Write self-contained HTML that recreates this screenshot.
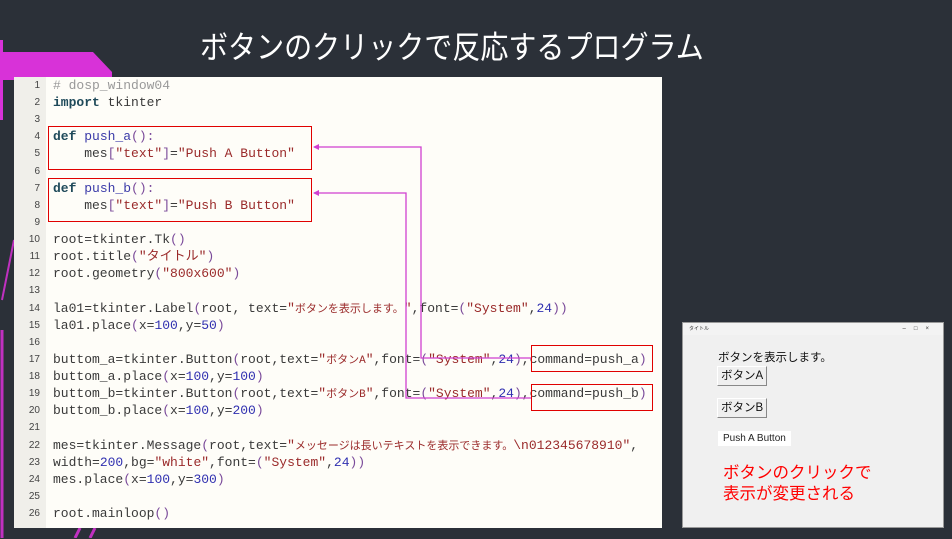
<!DOCTYPE html>
<html><head><meta charset="utf-8"><style>
*{margin:0;padding:0;box-sizing:border-box}
body{width:952px;height:538px;background:#2b3038;position:relative;overflow:hidden;font-family:"Liberation Sans","Noto Sans CJK JP",sans-serif}
.title{position:absolute;left:200px;top:22px;color:#fff;font-size:31.5px;white-space:nowrap;transform:scaleX(0.89);transform-origin:0 0}
.panel{position:absolute;left:14px;top:77px;width:648px;height:451px;background:#fefdf8}
.gutter{position:absolute;left:0;top:0;width:32px;height:451px;background:#f0efea}
.code{position:absolute;left:0;top:0;font-family:"Liberation Mono","Noto Sans CJK JP",monospace;font-size:13px;line-height:17.12px;color:#3a3a3a;white-space:pre}
.ln{position:absolute;left:0;width:26px;text-align:right;font-family:"Liberation Sans",sans-serif;font-size:10px;color:#444}
.l{position:absolute;left:39px}
.k{color:#1f4a5a;font-weight:bold}.f{color:#3a3aa8}.s{color:#9a2a2a}.n{color:#3030b0}.p{color:#7a4a9a}.c{color:#999}
.rb{position:absolute;border:1.5px solid #e00000}
.win{position:absolute;left:682px;top:322px;width:262px;height:206px;background:#f0f0f0;border:1px solid #999}
.tb{height:12px;background:#f3f3f3;font-size:5px;color:#333;padding-left:6px;line-height:12px}
.btn{position:absolute;left:34px;background:#efefef;border:1px solid #fff;border-right:1px solid #888;border-bottom:1px solid #888;font-size:11.5px;padding:2px 3px;color:#111;line-height:14px}
</style></head><body>
<svg width="952" height="538" style="position:absolute;left:0;top:0">
<polygon points="0,52 93,52 112,72 112,80 0,80" fill="#d832d8"/>
<rect x="0" y="40" width="3" height="80" fill="#d832d8"/>
<line x1="2" y1="300" x2="14" y2="240" stroke="#c030c0" stroke-width="2"/>
<line x1="2" y1="538" x2="2" y2="330" stroke="#c030c0" stroke-width="3"/>
<line x1="75" y1="538" x2="80" y2="528" stroke="#c030c0" stroke-width="3"/>
<line x1="90" y1="538" x2="95" y2="528" stroke="#c030c0" stroke-width="3"/>
</svg>
<div class="title">ボタンのクリックで反応するプログラム</div>
<div class="panel">
<div class="gutter"></div>
<div class="code">
<div class="ln" style="top:0">1</div><div class="l" style="top:0"><span class="c"># dosp_window04</span></div>
<div class="ln" style="top:17.12px">2</div><div class="l" style="top:17.12px"><span class="k">import</span> tkinter</div>
<div class="ln" style="top:34.24px">3</div>
<div class="ln" style="top:51.36px">4</div><div class="l" style="top:51.36px"><span class="k">def</span> <span class="f">push_a</span><span class="p">():</span></div>
<div class="ln" style="top:68.48px">5</div><div class="l" style="top:68.48px">    mes<span class="p">[</span><span class="s">"text"</span><span class="p">]</span>=<span class="s">"Push A Button"</span></div>
<div class="ln" style="top:85.6px">6</div>
<div class="ln" style="top:102.72px">7</div><div class="l" style="top:102.72px"><span class="k">def</span> <span class="f">push_b</span><span class="p">():</span></div>
<div class="ln" style="top:119.84px">8</div><div class="l" style="top:119.84px">    mes<span class="p">[</span><span class="s">"text"</span><span class="p">]</span>=<span class="s">"Push B Button"</span></div>
<div class="ln" style="top:136.96px">9</div>
<div class="ln" style="top:154.08px">10</div><div class="l" style="top:154.08px">root=tkinter.Tk<span class="p">()</span></div>
<div class="ln" style="top:171.2px">11</div><div class="l" style="top:171.2px">root.title<span class="p">(</span><span class="s">"タイトル"</span><span class="p">)</span></div>
<div class="ln" style="top:188.32px">12</div><div class="l" style="top:188.32px">root.geometry<span class="p">(</span><span class="s">"800x600"</span><span class="p">)</span></div>
<div class="ln" style="top:205.44px">13</div>
<div class="ln" style="top:222.56px">14</div><div class="l" style="top:222.56px">la01=tkinter.Label<span class="p">(</span>root, text=<span class="s">"<span style="font-size:11px">ボタンを表示します。</span>"</span>,font=<span class="p">(</span><span class="s">"System"</span>,<span class="n">24</span><span class="p">))</span></div>
<div class="ln" style="top:239.68px">15</div><div class="l" style="top:239.68px">la01.place<span class="p">(</span>x=<span class="n">100</span>,y=<span class="n">50</span><span class="p">)</span></div>
<div class="ln" style="top:256.8px">16</div>
<div class="ln" style="top:273.92px">17</div><div class="l" style="top:273.92px">buttom_a=tkinter.Button<span class="p">(</span>root,text=<span class="s">"<span style="font-size:11px">ボタンA</span>"</span>,font=<span class="p">(</span><span class="s">"System"</span>,<span class="n">24</span><span class="p">)</span>,command=push_a<span class="p">)</span></div>
<div class="ln" style="top:291.04px">18</div><div class="l" style="top:291.04px">buttom_a.place<span class="p">(</span>x=<span class="n">100</span>,y=<span class="n">100</span><span class="p">)</span></div>
<div class="ln" style="top:308.16px">19</div><div class="l" style="top:308.16px">buttom_b=tkinter.Button<span class="p">(</span>root,text=<span class="s">"<span style="font-size:11px">ボタンB</span>"</span>,font=<span class="p">(</span><span class="s">"System"</span>,<span class="n">24</span><span class="p">)</span>,command=push_b<span class="p">)</span></div>
<div class="ln" style="top:325.28px">20</div><div class="l" style="top:325.28px">buttom_b.place<span class="p">(</span>x=<span class="n">100</span>,y=<span class="n">200</span><span class="p">)</span></div>
<div class="ln" style="top:342.4px">21</div>
<div class="ln" style="top:359.52px">22</div><div class="l" style="top:359.52px">mes=tkinter.Message<span class="p">(</span>root,text=<span class="s">"<span style="font-size:11px">メッセージは長いテキストを表示できます。</span>\n012345678910"</span>,</div>
<div class="ln" style="top:376.64px">23</div><div class="l" style="top:376.64px">width=<span class="n">200</span>,bg=<span class="s">"white"</span>,font=<span class="p">(</span><span class="s">"System"</span>,<span class="n">24</span><span class="p">))</span></div>
<div class="ln" style="top:393.76px">24</div><div class="l" style="top:393.76px">mes.place<span class="p">(</span>x=<span class="n">100</span>,y=<span class="n">300</span><span class="p">)</span></div>
<div class="ln" style="top:410.88px">25</div>
<div class="ln" style="top:428px">26</div><div class="l" style="top:428px">root.mainloop<span class="p">()</span></div>
</div>
</div>
<div class="rb" style="left:48px;top:126px;width:264px;height:44px"></div>
<div class="rb" style="left:48px;top:178px;width:264px;height:44px"></div>
<div class="rb" style="left:531px;top:345px;width:122px;height:27px"></div>
<div class="rb" style="left:531px;top:384px;width:122px;height:27px"></div>
<svg width="952" height="538" style="position:absolute;left:0;top:0">
<g stroke="#d040d0" stroke-width="1.3" fill="none">
<polyline points="314,147 421,147 421,358 531,358"/>
<polyline points="314,193 406,193 406,398 531,398"/>
</g>
<polygon points="313,147 319,144 319,150" fill="#d040d0"/>
<polygon points="313,193 319,190 319,196" fill="#d040d0"/>
</svg>
<div class="win">
<div class="tb">タイトル<span style="position:absolute;right:6px;top:0;font-size:6px;letter-spacing:8px">–□×</span></div>
<div style="position:absolute;left:35px;top:26px;font-size:11.5px;color:#111">ボタンを表示します。</div>
<div class="btn" style="top:43px">ボタンA</div>
<div class="btn" style="top:75px">ボタンB</div>
<div style="position:absolute;left:35px;top:108px;background:#fff;font-size:10px;padding:2px 5px;color:#222">Push A Button</div>
<div style="position:absolute;left:40px;top:140px;color:#f00;font-size:16.5px;line-height:21px">ボタンのクリックで<br>表示が変更される</div>
</div>
</body></html>
